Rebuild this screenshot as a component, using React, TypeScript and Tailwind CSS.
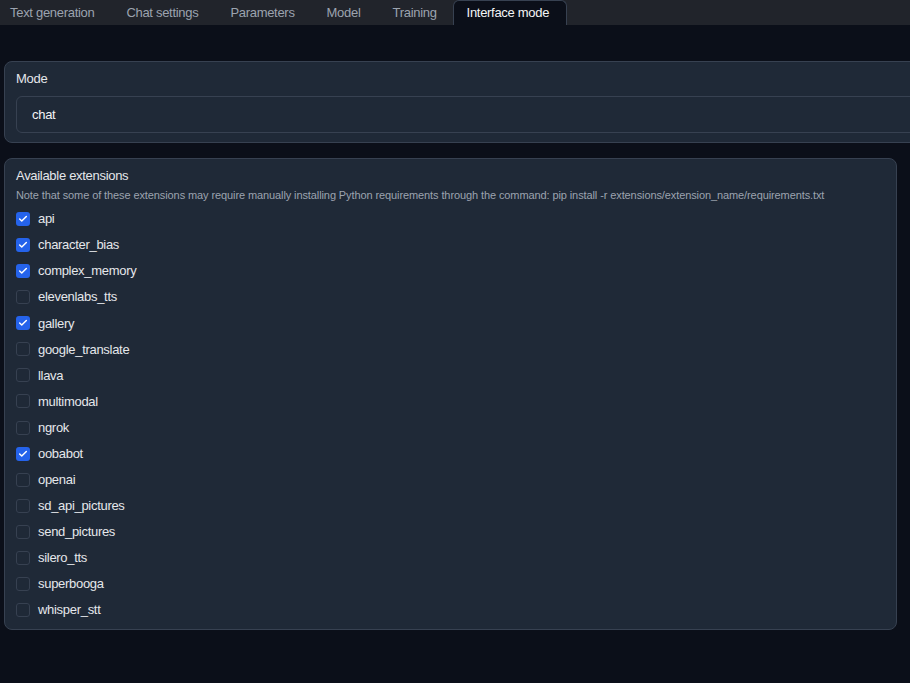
import { Check } from "lucide-react";

const tabs = ["Text generation", "Chat settings", "Parameters", "Model", "Training", "Interface mode"];

const extensions: [string, boolean][] = [
  ["api", true],
  ["character_bias", true],
  ["complex_memory", true],
  ["elevenlabs_tts", false],
  ["gallery", true],
  ["google_translate", false],
  ["llava", false],
  ["multimodal", false],
  ["ngrok", false],
  ["oobabot", true],
  ["openai", false],
  ["sd_api_pictures", false],
  ["send_pictures", false],
  ["silero_tts", false],
  ["superbooga", false],
  ["whisper_stt", false],
];

const font = "font-['Liberation_Sans',Arial,sans-serif]";

export default function App() {
  return (
    <div className={`w-[910px] h-[683px] overflow-hidden bg-[#0b0f19] ${font} text-[13px] tracking-[-0.3px]`}>
      {/* Tab bar */}
      <div className="h-[25px] bg-[#21242b] flex">
        <div className="flex -ml-[6px]">
          {tabs.map((t) => {
            const active = t === "Interface mode";
            return (
              <div
                key={t}
                className={
                  active
                    ? "h-[25px] pl-[13px] pr-[17px] flex items-center bg-[#0b0f19] border border-b-0 border-[#374151] rounded-t-[6px] text-[#f3f4f6]"
                    : "h-[25px] px-[15px] flex items-center border border-transparent text-[#9ca3af]"
                }
              >
                {t}
              </div>
            );
          })}
        </div>
      </div>

      <div className="pt-[36px] pl-[4px]">
        {/* Mode */}
        <div className="w-[1000px] bg-[#1f2937] border border-[#374151] rounded-[8px] pt-[9px] pb-[9px] px-[11px]">
          <div className="h-[16px] leading-[16px] text-[#e5e7eb]">Mode</div>
          <div className="mt-[9px] h-[37px] border border-[#374151] rounded-[6px] bg-[#1f2937] flex items-center px-[15px] text-[#f3f4f6]">
            chat
          </div>
        </div>

        {/* Extensions */}
        <div className="mt-[15px] w-[893px] bg-[#1f2937] border border-[#374151] rounded-[8px] pt-[9px] pb-[6px] px-[11px]">
          <div className="h-[16px] leading-[16px] text-[#e5e7eb]">Available extensions</div>
          <div className="mt-[4px] h-[14px] leading-[14px] text-[11px] tracking-[-0.1px] text-[#9ca3af]">
            Note that some of these extensions may require manually installing Python requirements through the command: pip install -r extensions/extension_name/requirements.txt
          </div>
          <div className="mt-[4px] flex flex-col">
            {extensions.map(([name, on]) => (
              <label key={name} className="h-[26.07px] flex items-center gap-[8px]">
                <span
                  className={
                    on
                      ? "w-[14px] h-[14px] rounded-[3px] bg-[#2563eb] flex items-center justify-center"
                      : "w-[14px] h-[14px] rounded-[3px] border border-[#374151] bg-[#1f2937]"
                  }
                >
                  {on && <Check size={10} strokeWidth={3.5} className="text-white" />}
                </span>
                <span className="text-[#e5e7eb]">{name}</span>
              </label>
            ))}
          </div>
        </div>
      </div>
    </div>
  );
}
